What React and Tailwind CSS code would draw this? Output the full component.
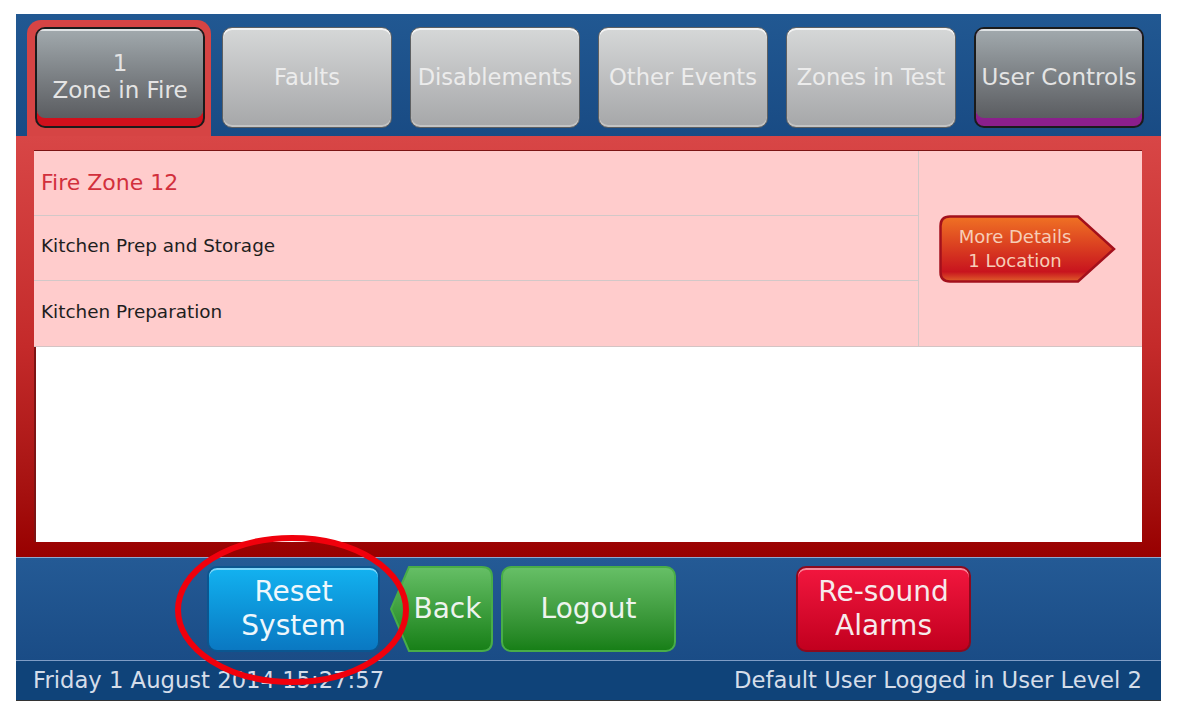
import React from "react";

const font = { fontFamily: '"DejaVu Sans", "Liberation Sans", sans-serif' };

const tabs = ["Faults", "Disablements", "Other Events", "Zones in Test"];

function GrayTab({ label }) {
  return (
    <div className="w-[170px] h-[101px] rounded-[10px] border border-[#5e6062] bg-gradient-to-b from-[#d6d8d8] to-[#a6a7a9] shadow-[inset_0_2px_0_#f4f4f4,inset_0_-2px_0_#c4c4c4] flex items-center justify-center">
      <span className="text-[22.6px] text-[#ececec]">{label}</span>
    </div>
  );
}

function DarkTab({ children, lip }) {
  return (
    <div
      className={`w-[170px] h-[101px] rounded-[10px] border-2 border-[#1b1b1b] overflow-hidden flex flex-col ${lip}`}
    >
      <div className="flex-1 pt-[7px] bg-gradient-to-b from-[#a2aaae] to-[#5b5d61] rounded-b-[8px] shadow-[inset_0_2px_0_#dfe3e5] flex flex-col items-center justify-center text-[23px] leading-[27px] text-[#e4e4e4]">
        {children}
      </div>
      <div className="h-[8px]" />
    </div>
  );
}

function BackButton() {
  return (
    <div className="relative w-[103px] h-[86px] flex items-center justify-center pl-[12px]">
      <svg className="absolute inset-0" width="103" height="86" viewBox="0 0 103 86">
        <defs>
          <linearGradient id="gback" x1="0" y1="0" x2="0" y2="1">
            <stop offset="0" stopColor="#66bf66" />
            <stop offset="1" stopColor="#177f17" />
          </linearGradient>
        </defs>
        <path
          d="M19 1 H92 Q102 1 102 11 V75 Q102 85 92 85 H19 L1 43 Z"
          fill="url(#gback)"
          stroke="#48ad48"
          strokeWidth="2"
        />
      </svg>
      <span className="relative text-[28px] text-[#eef4ee]">Back</span>
    </div>
  );
}

function MoreDetails() {
  return (
    <div className="relative w-[177px] h-[68px] flex flex-col items-center justify-center pr-[25px] text-[18px] leading-[24px] text-[#f7cdb7]">
      <svg className="absolute inset-0" width="177" height="68" viewBox="0 0 177 68">
        <defs>
          <linearGradient id="gmore" x1="0" y1="0" x2="0" y2="1">
            <stop offset="0" stopColor="#f07224" />
            <stop offset="0.85" stopColor="#c8141e" />
            <stop offset="1" stopColor="#e0602a" />
          </linearGradient>
        </defs>
        <path
          d="M11 1.5 H139 L175 34 L139 66.5 H11 Q1.5 66.5 1.5 57 V11 Q1.5 1.5 11 1.5 Z"
          fill="url(#gmore)"
          stroke="#a3101c"
          strokeWidth="2.5"
        />
      </svg>
      <span className="relative">More Details</span>
      <span className="relative">1 Location</span>
    </div>
  );
}

export default function App() {
  return (
    <div className="relative w-[1188px] h-[718px] bg-white pt-[14px] pl-[16px]" style={font}>
      <div className="w-[1145px] h-[686px] flex flex-col">
        {/* Tab bar */}
        <div className="h-[122px] bg-gradient-to-b from-[#215892] to-[#194b84] flex items-start pl-[11px] pt-[6px]">
          <div className="w-[184px] h-[116px] rounded-t-[14px] bg-[#d64444] pl-[8px] pr-[6px] pt-[7px]">
            <DarkTab lip="bg-[#d0101c]">
              <span>1</span>
              <span>Zone in Fire</span>
            </DarkTab>
          </div>
          <div className="flex gap-[18px] ml-[11px] mt-[7px]">
            {tabs.map((t) => (
              <GrayTab key={t} label={t} />
            ))}
            <DarkTab lip="bg-[#8b1f8c]">
              <span>User Controls</span>
            </DarkTab>
          </div>
        </div>

        {/* Red frame */}
        <div className="h-[421px] bg-gradient-to-b from-[#d84646] via-[#c42a2a] to-[#980000] pt-[14px] pl-[18px] pr-[19px] pb-[15px]">
          <div className="h-full bg-white shadow-[inset_2px_2px_0_#7c1414] border-t border-[#7c1414]">
            <div className="flex bg-[#ffcccc] border-b border-[#d4c4c4]">
              <div className="w-[884px] flex flex-col">
                <div className="h-[65px] border-b border-[#d2c8c8] flex items-center pl-[7px] pb-[1px] text-[22px] text-[#d2303c]">
                  Fire Zone 12
                </div>
                <div className="h-[65px] border-b border-[#d2c8c8] flex items-center pl-[7px] pb-[4px] text-[18.4px] text-[#1e1e1e]">
                  Kitchen Prep and Storage
                </div>
                <div className="h-[65px] flex items-center pl-[7px] pb-[4px] text-[18.4px] text-[#1e1e1e]">
                  Kitchen Preparation
                </div>
              </div>
              <div className="flex-1 border-l border-[#d2c8c8] flex items-center pl-[20px]">
                <MoreDetails />
              </div>
            </div>
          </div>
        </div>

        {/* Action bar */}
        <div className="h-[103px] border-t border-[#8eaad0] bg-gradient-to-b from-[#245a95] to-[#1a4c86] flex items-start pt-[8px]">
          <div className="ml-[191px] w-[173px] h-[86px] rounded-[10px] border-2 border-[#0b5690] bg-gradient-to-b from-[#13b2f0] to-[#0a78c2] shadow-[inset_0_2px_0_#7fd6f8] flex flex-col items-center justify-center text-[28px] leading-[34px] text-[#eef7fc]">
            <span>Reset</span>
            <span>System</span>
          </div>
          <div className="ml-[10px]">
            <BackButton />
          </div>
          <div className="ml-[8px] w-[175px] h-[86px] rounded-[10px] border-2 border-[#48ad48] bg-gradient-to-b from-[#66bf66] to-[#177f17] flex items-center justify-center text-[28px] text-[#eef4ee]">
            Logout
          </div>
          <div className="ml-[120px] w-[175px] h-[86px] rounded-[10px] border-2 border-[#8c0a1e] bg-gradient-to-b from-[#f2163e] to-[#c2001e] shadow-[inset_0_2px_0_#f98a9c] flex flex-col items-center justify-center text-[28px] leading-[34px] text-[#f6eaec]">
            <span>Re-sound</span>
            <span>Alarms</span>
          </div>
        </div>

        {/* Status bar */}
        <div className="h-[40px] border-t border-[#7e9dc6] bg-[#0f4379] flex items-center justify-between pl-[17px] pr-[19px] text-[22.7px] text-[#d5dde9] shadow-[0_1px_0_#333]">
          <span>Friday 1 August 2014 15:27:57</span>
          <span>Default User Logged in User Level 2</span>
        </div>
      </div>

      {/* Annotation ellipse */}
      <svg
        className="absolute left-[172px] top-[532px]"
        width="240"
        height="156"
        viewBox="0 0 240 156"
      >
        <ellipse cx="120" cy="78" rx="114" ry="72" fill="none" stroke="#f0000c" strokeWidth="6" />
      </svg>
    </div>
  );
}
